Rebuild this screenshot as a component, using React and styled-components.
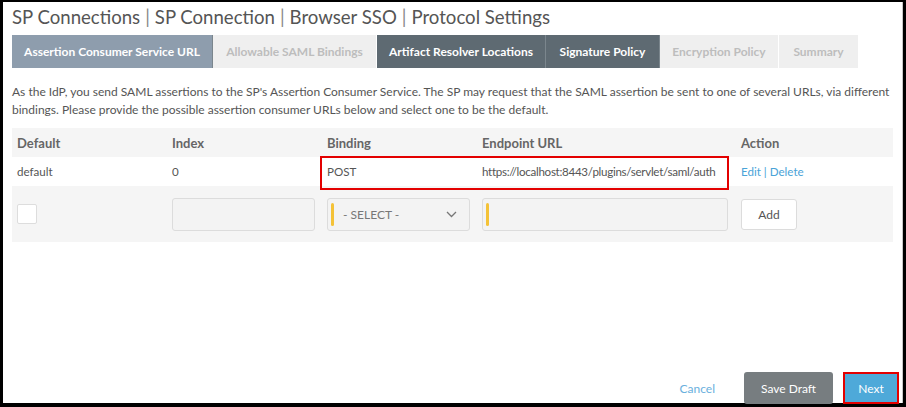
import React from 'react'
import styled, { createGlobalStyle } from 'styled-components'

const GlobalStyle = createGlobalStyle`
    html, body {
        margin: 0;
        padding: 0;
        background: #000;
    }
    body {
        font-family: Lato, "Open Sans", Arial, sans-serif;
        color: #555;
    }
`

const Frame = styled.div`
    width: 906px;
    height: 407px;
    box-sizing: border-box;
    padding: 2px 3px 4px 3px;
`

const Panel = styled.div`
    height: 100%;
    box-sizing: border-box;
    background: #fff;
    border-right: 1px solid #c8c8c8;
    padding: 3px 3px 0 9px;
    display: flex;
    flex-direction: column;
`

const Title = styled.h1`
    margin: 0;
    font-size: 18.6px;
    line-height: 24px;
    font-weight: 400;
    color: #555;
`

const Divider = styled.span`
    color: #888;
    padding: 0 5px;
`

const Tabs = styled.div`
    display: flex;
    margin-top: 6px;
    height: 33px;
`

const tabColors = {
    current: { bg: '#8e9dad', fg: '#fff' },
    done: { bg: '#5e6a72', fg: '#fff' },
    todo: { bg: '#efefef', fg: '#bdbdbd' },
}

const Tab = styled.div`
    width: ${(p) => p.$w}px;
    display: flex;
    align-items: center;
    justify-content: center;
    font-size: 12px;
    font-weight: 700;
    background: ${(p) => tabColors[p.$state].bg};
    color: ${(p) => tabColors[p.$state].fg};
    border-right: 1px solid ${(p) => (p.$state === 'todo' ? '#fff' : '#7b868d')};
    box-sizing: border-box;
`

const Description = styled.p`
    margin: 15px 0 0;
    font-size: 12px;
    line-height: 18px;
    color: #555;
`

const Table = styled.div`
    margin-top: 9px;
    width: 881px;
    display: grid;
    grid-template-columns: 155px 155px 155px 259px 1fr;
`

const Row = styled.div`
    display: contents;
`

const Cell = styled.div`
    height: ${(p) => p.$h}px;
    background: ${(p) => p.$bg};
    display: flex;
    align-items: center;
    padding-left: 5px;
    font-size: ${(p) => (p.$head ? 13 : 11.6)}px;
    font-weight: ${(p) => (p.$head ? 700 : 400)};
    color: ${(p) => (p.$head ? '#666' : '#555')};
    letter-spacing: ${(p) => (p.$tight ? '-0.3px' : 'normal')};
    position: relative;
    white-space: nowrap;
`

const Highlight = styled.div`
    position: absolute;
    z-index: 2;
    left: -2px;
    top: -1px;
    width: 405px;
    height: 30px;
    border: 2px solid #e30000;
    pointer-events: none;
`

const Links = styled.span`
    color: #4aa3d8;
    a {
        color: inherit;
        text-decoration: none;
    }
`

const Checkbox = styled.div`
    width: 18px;
    height: 18px;
    border: 1px solid #ddd;
    border-radius: 2px;
    background: #fff;
`

const Field = styled.div`
    width: ${(p) => p.$w}px;
    height: 33px;
    box-sizing: border-box;
    border: 1px solid #dcdcdc;
    border-radius: 3px;
    background: #f3f3f3;
    display: flex;
    align-items: center;
    position: relative;
    font-size: 12px;
    color: #777;
`

const Required = styled.span`
    position: absolute;
    left: 3px;
    top: 4px;
    bottom: 4px;
    width: 3px;
    border-radius: 2px;
    background: #f4c237;
`

const SelectText = styled.span`
    padding-left: 15px;
    flex: 1;
`

const Chevron = styled.svg`
    margin-right: 12px;
`

const AddButton = styled.button`
    width: 56px;
    height: 31px;
    border: 1px solid #dcdcdc;
    border-radius: 3px;
    background: #fff;
    font-family: inherit;
    font-size: 12px;
    color: #555;
`

const Footer = styled.div`
    margin-top: auto;
    display: flex;
    align-items: center;
    justify-content: flex-end;
    height: 32px;
    margin-bottom: -1px;
`

const CancelLink = styled.a`
    color: #6ab0dd;
    font-size: 12px;
    margin-right: 29px;
`

const Button = styled.button`
    height: 32px;
    box-sizing: border-box;
    font-family: inherit;
    font-size: 12px;
    color: #fff;
    background: ${(p) => (p.$primary ? '#4ea9d9' : '#777d80')};
    border: ${(p) => (p.$primary ? '2px solid #e30000' : 'none')};
    border-radius: ${(p) => (p.$primary ? '0' : '3px')};
    width: ${(p) => p.$w}px;
    margin-left: ${(p) => p.$ml || 0}px;
`

const tabs = [
    { label: 'Assertion Consumer Service URL', w: 201, state: 'current' },
    { label: 'Allowable SAML Bindings', w: 164, state: 'todo' },
    { label: 'Artifact Resolver Locations', w: 169, state: 'done' },
    { label: 'Signature Policy', w: 114, state: 'done' },
    { label: 'Encryption Policy', w: 119, state: 'todo' },
    { label: 'Summary', w: 80, state: 'todo' },
]

const headers = ['Default', 'Index', 'Binding', 'Endpoint URL', 'Action']

export default function App() {
    return (
        <>
            <GlobalStyle />
            <Frame>
                <Panel>
                    <Title>
                        SP Connections<Divider>|</Divider>SP Connection<Divider>|</Divider>Browser SSO
                        <Divider>|</Divider>Protocol Settings
                    </Title>
                    <Tabs>
                        {tabs.map((t) => (
                            <Tab key={t.label} $w={t.w} $state={t.state}>
                                {t.label}
                            </Tab>
                        ))}
                    </Tabs>
                    <Description>
                        As the IdP, you send SAML assertions to the SP's Assertion Consumer Service. The SP may
                        request that the SAML assertion be sent to one of several URLs, via different bindings.
                        Please provide the possible assertion consumer URLs below and select one to be the default.
                    </Description>
                    <Table>
                        <Row>
                            {headers.map((h) => (
                                <Cell key={h} $h={29} $bg="#f5f5f5" $head>
                                    {h}
                                </Cell>
                            ))}
                        </Row>
                        <Row>
                            <Cell $h={29} $bg="#fff">default</Cell>
                            <Cell $h={29} $bg="#fff">0</Cell>
                            <Cell $h={29} $bg="#fff">
                                POST
                                <Highlight />
                            </Cell>
                            <Cell $h={29} $bg="#fff" $tight>
                                https://localhost:8443/plugins/servlet/saml/auth
                            </Cell>
                            <Cell $h={29} $bg="#fff">
                                <Links>
                                    <a href="#">Edit</a> | <a href="#">Delete</a>
                                </Links>
                            </Cell>
                        </Row>
                        <Row>
                            <Cell $h={56} $bg="#f5f5f5">
                                <Checkbox />
                            </Cell>
                            <Cell $h={56} $bg="#f5f5f5">
                                <Field $w={143} />
                            </Cell>
                            <Cell $h={56} $bg="#f5f5f5">
                                <Field $w={143}>
                                    <Required />
                                    <SelectText>- SELECT -</SelectText>
                                    <Chevron width="11" height="7" viewBox="0 0 11 7">
                                        <path d="M1 1l4.5 4.5L10 1" fill="none" stroke="#777" strokeWidth="1.3" />
                                    </Chevron>
                                </Field>
                            </Cell>
                            <Cell $h={56} $bg="#f5f5f5">
                                <Field $w={246}>
                                    <Required />
                                </Field>
                            </Cell>
                            <Cell $h={56} $bg="#f5f5f5">
                                <AddButton>Add</AddButton>
                            </Cell>
                        </Row>
                    </Table>
                    <Footer>
                        <CancelLink>Cancel</CancelLink>
                        <Button $w={89}>Save Draft</Button>
                        <Button $primary $w={56} $ml={10}>Next</Button>
                    </Footer>
                </Panel>
            </Frame>
        </>
    )
}
